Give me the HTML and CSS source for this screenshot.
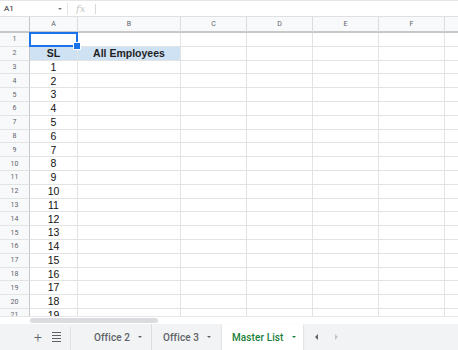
FILE: index.html
```html
<!DOCTYPE html>
<html>
<head>
<meta charset="utf-8">
<link rel="stylesheet" href="styles.css">
</head>
<body>
<div class="app">
  <div class="formula-bar">
    <div class="name-box"><span class="ref">A1</span><span class="caret"></span></div>
    <div class="divider"></div>
    <div class="fx">fx</div>
    <div class="divider thin"></div>
  </div>
  <div class="grid-wrap">
    <div class="sheet" id="sheet">
      <div class="corner"></div>
      <div class="colh">A</div>
      <div class="colh">B</div>
      <div class="colh">C</div>
      <div class="colh">D</div>
      <div class="colh">E</div>
      <div class="colh">F</div>
      <div class="colh last"></div>
    </div>
  </div>
  <div class="hscroll"><div class="thumb"></div></div>
  <div class="tabbar">
    <div class="tools">
      <span class="plus">+</span>
      <span class="menu"><i></i><i></i><i></i><i></i></span>
    </div>
    <div class="tsep"></div>
    <div class="tab t1">Office 2<span class="tcaret"></span></div>
    <div class="tab t2">Office 3<span class="tcaret"></span></div>
    <div class="tab active">Master List<span class="tcaret"></span></div>
    <div class="navs"><span class="nav-l"></span><span class="nav-r"></span></div>
  </div>
</div>
<script>
(function(){
  var s = document.getElementById('sheet');
  var html = '';
  for (var r = 1; r <= 21; r++) {
    html += '<div class="rowh">' + r + '</div>';
    var a = '', b = '', cls = '';
    if (r === 2) { a = 'SL'; b = 'All Employees'; cls = ' hl bold'; }
    else if (r >= 3) { a = String(r - 2); }
    html += '<div class="cell num' + cls + (r === 1 ? ' sel' : '') + '">' + a + '</div>';
    html += '<div class="cell' + cls + '">' + b + '</div>';
    for (var c = 0; c < 4; c++) html += '<div class="cell"></div>';
    html += '<div class="cell last"></div>';
  }
  s.insertAdjacentHTML('beforeend', html);
})();
</script>
</body>
</html>
```
FILE: styles.css
```css
* { box-sizing: border-box; }
html, body { margin: 0; padding: 0; background: #fff; }
body { font-family: Roboto, "Liberation Sans", Arial, sans-serif; width: 458px; height: 350px; overflow: hidden; }
.app { width: 458px; height: 350px; display: flex; flex-direction: column; }

.formula-bar {
  height: 17px; flex: none;
  display: flex; align-items: center;
  border-top: 1px solid #e6e6e6;
  border-bottom: 1px solid #e0e0e0;
}
.name-box { width: 67px; display: flex; align-items: center; padding-left: 4px; }
.ref { font-size: 8px; color: #202124; flex: 1; }
.caret { width: 0; height: 0; border-left: 2.5px solid transparent; border-right: 2.5px solid transparent; border-top: 2.5px solid #777; margin-right: 5px; }
.divider { width: 1px; height: 12px; background: #e3e3e3; }
.divider.thin { height: 10px; background: #d8d8d8; }
.fx { font-family: "DejaVu Serif", "Liberation Serif", serif; font-style: italic; font-size: 10px; color: #c4c7c5; width: 27px; padding-left: 8px; }

.grid-wrap { height: 299px; flex: none; overflow: hidden; }
.sheet {
  display: grid;
  grid-template-columns: 30px 48px 103px 66px 66px 66px 66px 1fr;
  grid-template-rows: 16px;
  grid-auto-rows: 13.8px;
}
.corner { background: #f8f9fa; border-right: 1px solid #c7c7c7; border-bottom: 2px solid #c7c7c7; }
.colh {
  background: #f8f9fa; color: #5f6368; font-size: 7px;
  display: flex; align-items: center; justify-content: center;
  border-right: 1px solid #dadce0; border-bottom: 2px solid #c7c7c7;
}
.colh.last { border-right: none; }
.rowh {
  background: #f8f9fa; color: #5f6368; font-size: 7px;
  display: flex; align-items: center; justify-content: center;
  border-right: 1px solid #c7c7c7; border-bottom: 1px solid #e2e3e3;
}
.cell {
  border-right: 1px solid #e2e3e3; border-bottom: 1px solid #e2e3e3;
  font-family: "Liberation Sans", Arial, sans-serif; font-size: 10.5px; color: #111;
  display: flex; align-items: center; justify-content: center;
  white-space: nowrap; overflow: hidden; line-height: 1;
}
.cell.last { border-right: none; }
.cell.hl { background: #cfe2f3; }
.cell.bold { font-weight: bold; color: #1f1f1f; }
.cell.sel { position: relative; overflow: visible; }
.cell.sel::after {
  content: ""; position: absolute; left: -1px; top: -1px; right: -1px; bottom: -1px;
  border: 2px solid #1a73e8;
}
.cell.sel::before {
  content: ""; position: absolute; right: -4px; bottom: -4px; width: 6px; height: 6px;
  background: #1a73e8; border: 1px solid #fff; z-index: 2;
}

.hscroll { height: 8px; flex: none; background: #fff; border-top: 1px solid #e8e8e8; }
.thumb { margin-left: 30px; margin-top: 1px; width: 128px; height: 5px; border-radius: 3px; background: #dadce0; }

.tabbar { flex: 1; background: #f1f3f4; display: flex; align-items: stretch; }
.tools { width: 70px; flex: none; display: flex; align-items: center; justify-content: flex-end; gap: 10px; padding-right: 9px; }
.plus { font-size: 14px; color: #5f6368; line-height: 1; font-weight: 300; margin-top: -1px; }
.menu { display: flex; flex-direction: column; gap: 1.5px; width: 9px; }
.menu i { display: block; height: 1.3px; background: #5f6368; }
.tsep { width: 1px; flex: none; background: #e0e0e0; margin: 3px 12px 0 0; }
.tab {
  flex: none; white-space: nowrap;
  display: flex; align-items: center; padding: 0 0 0 11px;
  font-size: 10px; font-weight: 500; color: #5f6368; letter-spacing: 0.1px;
}
.tab.t1 { width: 69px; border-right: 1px solid #dadce0; }
.tab.t2 { width: 69px; }
.tcaret { width: 0; height: 0; border-left: 2.5px solid transparent; border-right: 2.5px solid transparent; border-top: 2.5px solid #5f6368; margin-left: 8px; }
.tab.active { background: #fff; color: #188038; width: 81px; margin-left: 1px; padding-left: 10px; box-shadow: 0 1px 2px rgba(60,64,67,0.25); }
.tab.active .tcaret { border-top-color: #188038; }
.navs { display: flex; align-items: center; gap: 17px; padding-left: 12px; }
.nav-l { width: 0; height: 0; border-top: 3px solid transparent; border-bottom: 3px solid transparent; border-right: 3.5px solid #5f6368; }
.nav-r { width: 0; height: 0; border-top: 3px solid transparent; border-bottom: 3px solid transparent; border-left: 3.5px solid #c4c7c5; }
```
